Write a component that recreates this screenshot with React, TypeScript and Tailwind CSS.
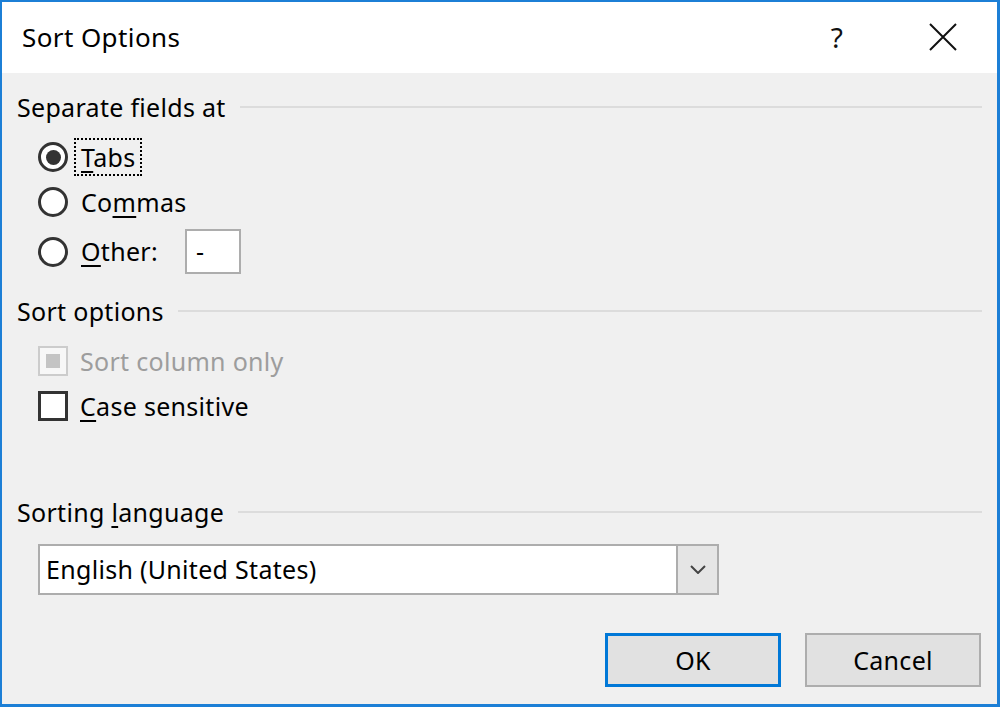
import React from "react";

const font = { fontFamily: '"Noto Sans", "Open Sans", sans-serif' };
const txt = "text-[25px] leading-none tracking-[0.3px]";

function GroupHeader({ children, mt }: { children: React.ReactNode; mt: string }) {
  return (
    <div className={`flex items-center h-[34px] pr-[15px] ${mt}`}>
      <span className={`${txt} text-black whitespace-nowrap`}>{children}</span>
      <div className="flex-1 h-[2px] bg-[#dcdcdc] ml-[14px]" />
    </div>
  );
}

function Radio({ checked }: { checked?: boolean }) {
  return (
    <div className="w-[30px] h-[30px] rounded-full border-[3px] border-[#333333] bg-white flex items-center justify-center shrink-0">
      {checked && <div className="w-[15px] h-[15px] rounded-full bg-[#333333]" />}
    </div>
  );
}

export default function App() {
  return (
    <div
      className="w-[1000px] h-[707px] flex flex-col bg-[#f0f0f0] border-l-2 border-t-2 border-r-[3px] border-b-[3px] border-[#1c7fd6] overflow-hidden"
      style={font}
    >
      {/* Title bar */}
      <div className="h-[71px] bg-white flex items-center shrink-0">
        <span className="ml-[20px] text-[26px] tracking-[0.4px] text-black leading-none mt-[-2px]">Sort Options</span>
        <div className="flex-1" />
        <span className="text-[28px] text-[#111] leading-none mr-[86px] mt-[-2px]">?</span>
        <svg width="28" height="28" viewBox="0 0 28 28" className="mr-[40px] mt-[-2px]">
          <path d="M1 1 L27 27 M27 1 L1 27" stroke="#111" strokeWidth="2" fill="none" />
        </svg>
      </div>

      <div className="flex flex-col pl-[15px]">
        <GroupHeader mt="mt-[17px]">Separate fields at</GroupHeader>

        <div className="flex items-center h-[38px] mt-[14px] ml-[21px]">
          <Radio checked />
          <span className={`ml-[6px] h-[38px] flex items-center px-[5px] border-2 border-dotted border-black ${txt}`}>
            <span><u className="underline-offset-[4px] decoration-[2px]">T</u>abs</span>
          </span>
        </div>

        <div className="flex items-center h-[38px] mt-[7px] ml-[21px]">
          <Radio />
          <span className={`ml-[6px] h-[38px] flex items-center px-[5px] border-2 border-transparent ${txt}`}>
            <span>Co<u className="underline-offset-[4px] decoration-[2px]">m</u>mas</span>
          </span>
        </div>

        <div className="flex items-center h-[45px] mt-[8px] ml-[21px]">
          <Radio />
          <span className={`ml-[6px] w-[111px] h-[38px] flex items-center px-[5px] border-2 border-transparent ${txt}`}>
            <span><u className="underline-offset-[4px] decoration-[2px]">O</u>ther:</span>
          </span>
          <div className={`w-[56px] h-[45px] bg-white border-2 border-[#adadad] flex items-center pl-[9px] ${txt}`}>
            -
          </div>
        </div>

        <GroupHeader mt="mt-[20px]">Sort options</GroupHeader>

        <div className="flex items-center h-[30px] mt-[18px] ml-[21px]">
          <div className="w-[30px] h-[30px] border-2 border-[#cccccc] bg-[#f7f7f7] flex items-center justify-center shrink-0">
            <div className="w-[14px] h-[14px] bg-[#c4c4c4]" />
          </div>
          <span className={`ml-[12px] ${txt} text-[#9d9d9d]`}>Sort column only</span>
        </div>

        <div className="flex items-center h-[30px] mt-[15px] ml-[21px]">
          <div className="w-[30px] h-[30px] border-[3px] border-[#333333] bg-white shrink-0" />
          <span className={`ml-[12px] ${txt}`}>
            <u className="underline-offset-[4px] decoration-[2px]">C</u>ase sensitive
          </span>
        </div>

        <GroupHeader mt="mt-[74px]">
          Sorting <u className="underline-offset-[4px] decoration-[2px]">l</u>anguage
        </GroupHeader>

        <div className="mt-[15px] ml-[21px] w-[681px] h-[51px] bg-white border-2 border-[#adadad] flex items-stretch">
          <div className={`flex-1 flex items-center pl-[6px] ${txt}`}>English (United States)</div>
          <div className="w-[41px] bg-[#e5e5e5] border-l-2 border-[#adadad] flex items-center justify-center">
            <svg width="16" height="9" viewBox="0 0 16 9">
              <path d="M1 1 L8 8 L15 1" stroke="#444" strokeWidth="2" fill="none" />
            </svg>
          </div>
        </div>

        <div className="mt-[38px] flex justify-end gap-[24px] pr-[16px]">
          <div className={`w-[176px] h-[54px] bg-[#e1e1e1] border-[3px] border-[#0078d7] flex items-center justify-center ${txt}`}>
            OK
          </div>
          <div className={`w-[176px] h-[54px] bg-[#e1e1e1] border-2 border-[#adadad] flex items-center justify-center ${txt}`}>
            Cancel
          </div>
        </div>
      </div>
    </div>
  );
}
